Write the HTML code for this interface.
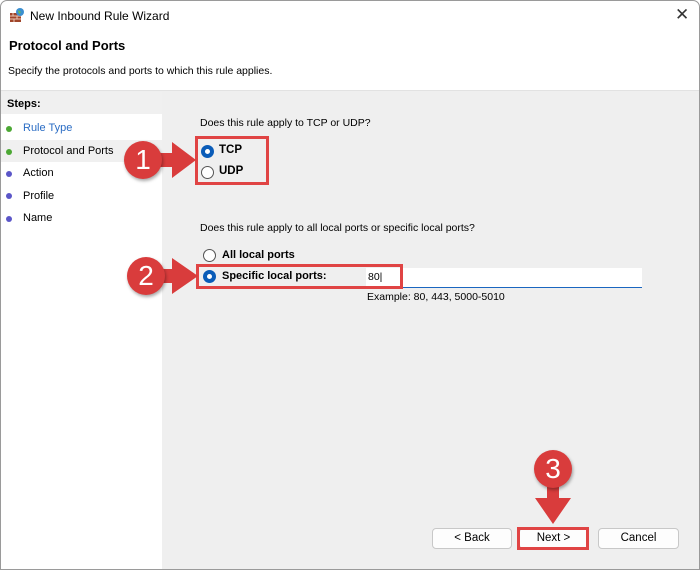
<!DOCTYPE html>
<html><head><style>
*{margin:0;padding:0;box-sizing:border-box}
body{width:700px;height:570px;background:#fff;font-family:"Liberation Sans",sans-serif;font-size:11px;color:#000;position:relative;overflow:hidden}
.a{position:absolute}
.frame{left:0;top:0;width:700px;height:570px;border:1px solid #9a9a9a;border-radius:7px 7px 0 0}
.radio{width:13px;height:13px;border-radius:50%;border:1px solid #555;background:#fff}
.radio.on{border:4px solid #0a5cb8;background:#fff}
.btn{height:21px;border:1px solid #c8c8c8;border-radius:4px;background:#fdfdfd;text-align:center;line-height:19px;font-size:11.5px}
.rb{border:3px solid #e04444}
.badge{width:38px;height:38px;border-radius:50%;background:#d93c3c;color:#fff;font-size:28px;text-align:center;line-height:38px;box-shadow:1px 2px 3px rgba(0,0,0,.35)}
.dot{width:6px;height:6px;border-radius:50%}
</style></head><body>
<div class="a" style="left:0;top:90px;width:700px;height:480px;background:#efefef;border-top:1px solid #e2e2e2"></div>
<div class="a" style="left:0;top:92px;width:162px;height:478px;background:#fff"></div>
<div class="a" style="left:0;top:92px;width:162px;height:22px;background:#f0f0f0"></div>
<div class="a" style="left:0;top:140px;width:162px;height:22px;background:#f0f0f0"></div>
<div class="a frame"></div>
<!-- title -->
<svg class="a" style="left:9px;top:7px" width="16" height="16" viewBox="0 0 16 16"><rect x="1" y="6" width="11" height="9" fill="#a0452a"/><path d="M1 9h11M1 12h11M4 6v3M8 9v3M5 12v3" stroke="#e9c6b5" stroke-width="1"/><circle cx="11" cy="5" r="4" fill="#3b8fd0"/><path d="M9 3l3 2-2 2" fill="#6fbf4a"/></svg>
<div class="a" style="left:30px;top:9px;font-size:12px">New Inbound Rule Wizard</div>
<div class="a" style="left:675px;top:5px;font-size:17px;color:#333">✕</div>
<div class="a" style="left:9px;top:38px;font-size:13px;font-weight:bold">Protocol and Ports</div>
<div class="a" style="left:8px;top:65px;font-size:10.5px">Specify the protocols and ports to which this rule applies.</div>
<!-- steps -->
<div class="a" style="left:7px;top:98px;font-weight:bold;font-size:11px">Steps:</div>
<div class="a dot" style="left:6px;top:126px;background:#4ca834"></div><div class="a" style="left:23px;top:122px;color:#2a6cc4">Rule Type</div>
<div class="a dot" style="left:6px;top:149px;background:#4ca834"></div><div class="a" style="left:23px;top:145px">Protocol and Ports</div>
<div class="a dot" style="left:6px;top:171px;background:#5b56c8"></div><div class="a" style="left:23px;top:167px">Action</div>
<div class="a dot" style="left:6px;top:193px;background:#5b56c8"></div><div class="a" style="left:23px;top:190px">Profile</div>
<div class="a dot" style="left:6px;top:216px;background:#5b56c8"></div><div class="a" style="left:23px;top:212px">Name</div>
<!-- main -->
<div class="a" style="left:200px;top:117px;font-size:10.5px">Does this rule apply to TCP or UDP?</div>
<div class="a radio on" style="left:201px;top:145px"></div><div class="a" style="left:219px;top:144px;font-weight:bold;font-size:11.5px">TCP</div>
<div class="a radio" style="left:201px;top:166px"></div><div class="a" style="left:219px;top:165px;font-weight:bold;font-size:11.5px">UDP</div>
<div class="a rb" style="left:195px;top:136px;width:74px;height:49px"></div>
<div class="a" style="left:200px;top:222px;font-size:10.5px">Does this rule apply to all local ports or specific local ports?</div>
<div class="a radio" style="left:203px;top:249px"></div><div class="a" style="left:222px;top:249px;font-weight:bold;font-size:11px">All local ports</div>
<div class="a" style="left:366px;top:268px;width:276px;height:20px;background:#fff;border-bottom:1px solid #1a66c0"></div>
<div class="a radio on" style="left:203px;top:270px"></div><div class="a" style="left:222px;top:270px;font-weight:bold;font-size:11px">Specific local ports:</div>
<div class="a" style="left:368px;top:271px;font-size:10.5px">80|</div>
<div class="a rb" style="left:196px;top:264px;width:207px;height:25px"></div>
<div class="a" style="left:367px;top:291px;font-size:10.5px">Example: 80, 443, 5000-5010</div>
<!-- badges -->
<svg class="a" style="left:150px;top:140px" width="50" height="40"><path d="M0 13h22V2l24 18-24 18V27H0z" fill="#d93c3c"/></svg>
<div class="a badge" style="left:124px;top:141px">1</div>
<svg class="a" style="left:150px;top:256px" width="52" height="40"><path d="M0 13h22V2l26 18-26 18V27H0z" fill="#d93c3c"/></svg>
<div class="a badge" style="left:127px;top:257px">2</div>
<svg class="a" style="left:532px;top:470px" width="42" height="56"><path d="M15 0h12v28h12L21 54 3 28h12z" fill="#d93c3c"/></svg>
<div class="a badge" style="left:534px;top:450px">3</div>
<!-- buttons -->
<div class="a btn" style="left:432px;top:528px;width:80px">&lt; Back</div>
<div class="a btn" style="left:519px;top:528px;width:69px">Next &gt;</div>
<div class="a rb" style="left:517px;top:527px;width:72px;height:23px"></div>
<div class="a btn" style="left:598px;top:528px;width:81px">Cancel</div>
</body></html>
